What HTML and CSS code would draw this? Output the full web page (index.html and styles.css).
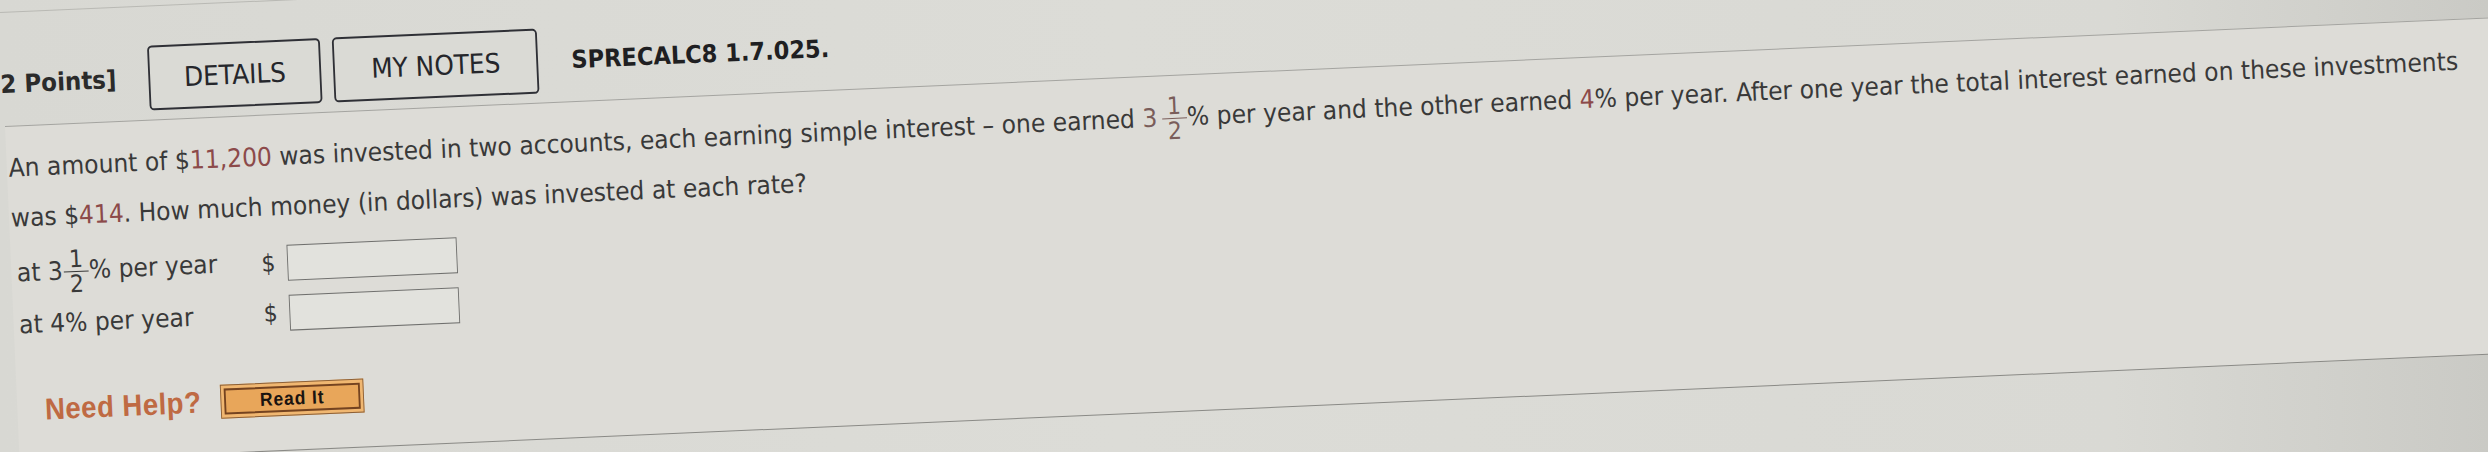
FILE: index.html
```html
<!DOCTYPE html>
<html lang="en">
<head>
<meta charset="utf-8">
<title>SPRECALC8 1.7.025.</title>
<link rel="stylesheet" href="styles.css">
</head>
<body>
<div class="page">
  <div class="header">
    <span class="points">2 Points]</span>
    <span class="hbtn details">DETAILS</span>
    <span class="hbtn notes">MY NOTES</span>
    <span class="code">SPRECALC8 1.7.025.</span>
  </div>
  <div class="question">
    <p class="stmt">An amount of $<span class="num-red">11,200</span> was invested in two accounts, each earning simple interest &ndash; one earned <span class="mixed">3<span class="frac wide"><span class="fn">1</span><span class="fd">2</span></span></span>% per year and the other earned <span class="num-red">4</span>% per year. After one year the total interest earned on these investments<br>was $<span class="num-red">414</span>. How much money (in dollars) was invested at each rate?</p>
    <div class="answers">
      <div class="arow">
        <span class="alabel">at 3<span class="frac"><span class="fn">1</span><span class="fd">2</span></span>% per year</span>
        <span class="dollar">$</span>
        <span class="abox"></span>
      </div>
      <div class="arow">
        <span class="alabel">at 4% per year</span>
        <span class="dollar">$</span>
        <span class="abox"></span>
      </div>
    </div>
    <div class="help">
      <span class="need">Need Help?</span>
      <span class="readit"><span class="readit-in">Read It</span></span>
    </div>
  </div>
</div>
</body>
</html>
```

FILE: styles.css
```css
html, body {
  margin: 0;
  padding: 0;
  overflow: hidden;
}
body {
  width: 2488px;
  height: 452px;
  background: linear-gradient(90deg, #d8d8d3 0%, #dcdcd7 45%, #d9d9d4 85%, #cacac5 100%);
  font-family: "DejaVu Sans", Verdana, sans-serif;
  color: #393939;
}
.page {
  width: 2800px;
  transform-origin: 0 0;
  transform: rotate(-2.5deg) scaleX(0.92);
}
.header {
  margin-top: 12px;
  border-top: 1px solid #b9b9b4;
  padding: 39px 0 9px 0;
  display: flex;
  align-items: center;
  height: 65px;
}
.points {
  margin-left: -3px;
  font-size: 25px;
  font-weight: bold;
  color: #2b2b2b;
}
.hbtn {
  box-sizing: border-box;
  height: 65px;
  border: 2px solid #2f3036;
  border-radius: 5px;
  display: flex;
  align-items: center;
  justify-content: center;
  font-size: 27px;
  color: #25262b;
  background: #dadad5;
}
.details {
  width: 188px;
  margin-left: 35px;
}
.notes {
  width: 223px;
  margin-left: 13px;
}
.code {
  margin-left: 36px;
  font-size: 24.5px;
  font-weight: bold;
  color: #1f1f22;
}
.question {
  border-top: 1px solid #a4a4a0;
  border-bottom: 1px solid #8a8a86;
  background: #dddcd7;
  padding: 16px 0 34px 0;
  font-size: 25.5px;
}
.stmt {
  margin: 0;
  padding-left: 2px;
  line-height: 50px;
  white-space: nowrap;
}
.num-red {
  color: #8c4a4a;
}
.mixed {
  color: #7a5d5a;
}
.frac {
  display: inline-flex;
  flex-direction: column;
  vertical-align: middle;
  text-align: center;
  line-height: 21px;
  font-size: 24px;
  margin-left: 1px;
}
.frac.wide {
  margin-left: 5px;
}
.fn {
  padding: 0 6px 1px 6px;
  border-bottom: 1.5px solid currentColor;
}
.fd {
  padding-top: 2px;
}
.answers {
  margin-top: 9px;
  display: flex;
  flex-direction: column;
  gap: 19px;
}
.arow {
  display: grid;
  grid-template-columns: 266px 28px 185px;
  align-items: center;
  height: 36px;
  padding-left: 6px;
  white-space: nowrap;
}
.dollar {
  font-size: 24px;
}
.abox {
  box-sizing: border-box;
  height: 36px;
  border: 1.5px solid #6f6f6d;
  background: #e2e2dd;
}
.help {
  margin-top: 51px;
  padding-left: 30px;
  display: flex;
  align-items: center;
  height: 34px;
}
.need {
  font-family: "Liberation Sans", Arial, sans-serif;
  font-weight: bold;
  font-size: 30px;
  letter-spacing: 0.5px;
  color: #bf6a43;
}
.readit {
  box-sizing: border-box;
  margin-left: 21px;
  width: 156px;
  height: 34px;
  border: 1px solid #8c6038;
  background: #f0b771;
  padding: 3px;
  display: flex;
}
.readit-in {
  flex: 1;
  border: 2px solid #744320;
  background: #e8a65a;
  display: flex;
  align-items: center;
  justify-content: center;
  font-family: "Liberation Sans", Arial, sans-serif;
  font-weight: bold;
  font-size: 19px;
  letter-spacing: 1px;
  color: #1a1410;
}
```
